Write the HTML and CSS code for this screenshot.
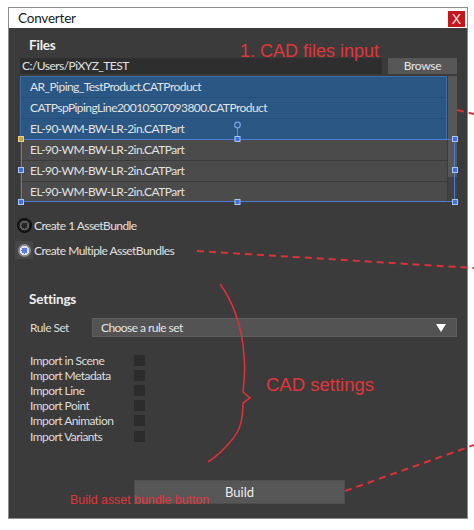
FILE: index.html
```html
<!DOCTYPE html>
<html>
<head>
<meta charset="utf-8">
<link rel="stylesheet" href="styles.css">
</head>
<body>
<div class="window">
  <div class="titlebar">
    <span class="title">Converter</span>
    <span class="close">X</span>
  </div>
  <div class="content">
    <div class="heading">Files</div>
    <div class="path-row">
      <div class="path">C:/Users/PiXYZ_TEST</div>
      <div class="browse">Browse</div>
    </div>
    <div class="list-wrap">
      <div class="list">
        <div class="sel-group">
          <div class="row sel">AR_Piping_TestProduct.CATProduct</div>
          <div class="row sel">CATPspPipingLine20010507093800.CATProduct</div>
          <div class="row sel last">EL-90-WM-BW-LR-2in.CATPart</div>
        </div>
        <div class="row">EL-90-WM-BW-LR-2in.CATPart</div>
        <div class="row">EL-90-WM-BW-LR-2in.CATPart</div>
        <div class="row">EL-90-WM-BW-LR-2in.CATPart</div>
      </div>
      <div class="scroll"><div class="thumb"></div></div>
    </div>
    <div class="radios">
      <div class="radio-row first">
        <span class="rbox"><span class="radio off"></span></span>
        <span class="rlabel">Create 1 AssetBundle</span>
      </div>
      <div class="radio-row second">
        <span class="rbox active"><span class="radio on"></span></span>
        <span class="rlabel">Create Multiple AssetBundles</span>
      </div>
    </div>
    <div class="heading settings">Settings</div>
    <div class="rule-row">
      <span class="label">Rule Set</span>
      <div class="dropdown"><span>Choose a rule set</span><span class="tri"></span></div>
    </div>
    <div class="checks">
      <div class="check-row"><span class="clabel">Import in Scene</span><span class="cb"></span></div>
      <div class="check-row"><span class="clabel">Import Metadata</span><span class="cb"></span></div>
      <div class="check-row"><span class="clabel">Import Line</span><span class="cb"></span></div>
      <div class="check-row"><span class="clabel">Import Point</span><span class="cb"></span></div>
      <div class="check-row"><span class="clabel">Import Animation</span><span class="cb"></span></div>
      <div class="check-row"><span class="clabel">Import Variants</span><span class="cb"></span></div>
    </div>
    <div class="build">Build</div>
  </div>
</div>

<svg class="overlay" width="474" height="530" viewBox="0 0 474 530">
  <rect x="21.5" y="139.5" width="433" height="62" fill="none" stroke="#4c7ad4" stroke-width="1"/>
  <line x1="237.5" y1="128" x2="237.5" y2="139" stroke="#5d8ade" stroke-width="1"/>
  <circle cx="237.5" cy="125" r="2.8" fill="none" stroke="#7aa4ea" stroke-width="1.2"/>
  <g fill="#3f70e0" stroke="#a9c6f6" stroke-width="1">
    <rect x="235" y="136.5" width="5" height="5"/>
    <rect x="452.5" y="136.5" width="5" height="5"/>
    <rect x="18.5" y="167.5" width="5" height="5"/>
    <rect x="452.5" y="167.5" width="5" height="5"/>
    <rect x="18.5" y="199.5" width="5" height="5"/>
    <rect x="235" y="199.5" width="5" height="5"/>
    <rect x="452.5" y="199.5" width="5" height="5"/>
  </g>
  <rect x="18.5" y="136.5" width="5" height="5" fill="#c9a63a" stroke="#e6d28a" stroke-width="1"/>

  <g stroke="#df3038" stroke-width="2" fill="none" stroke-dasharray="7 5">
    <line x1="197" y1="251" x2="474" y2="268"/>
    <line x1="345" y1="491" x2="474" y2="445"/>
    <line x1="457" y1="110" x2="474" y2="114"/>
  </g>
  <path d="M220,284 C232,300 242,325 244,355 C246,375 243,388 243,392 L250,398 L243,403 C243,420 240,432 230,442 C222,452 214,458 208,462" fill="none" stroke="#df3038" stroke-width="1.6"/>

  <text x="240" y="57" class="anno big">1. CAD files input</text>
  <text x="266" y="391" class="anno mid">CAD settings</text>
  <text x="70" y="504" class="anno small">Build asset bundle button</text>
</svg>
</body>
</html>
```

FILE: styles.css
```css
* { box-sizing: border-box; }
html, body { margin: 0; padding: 0; background: #ffffff; }
body {
  width: 474px;
  height: 530px;
  position: relative;
  overflow: hidden;
  font-family: Lato, "Noto Sans", sans-serif;
}
.window {
  margin: 7px 0 0 8px;
  width: 460px;
  border: 1px solid #8c8c8c;
}
.titlebar {
  height: 20px;
  background: #ffffff;
  display: flex;
  align-items: center;
  justify-content: space-between;
  padding: 0 2px 0 9px;
}
.title { font-size: 13.5px; color: #1a1a1a; letter-spacing: -0.2px; }
.close {
  width: 17px;
  height: 16px;
  margin-top: 2px;
  background: #c4161c;
  color: #ffe6e6;
  font: 14px "Liberation Sans", sans-serif;
  display: flex;
  align-items: center;
  justify-content: center;
}
.content {
  background: #3b3b3b;
  height: 490px;
  padding: 9px 10px 0 11px;
  color: #dcdcdc;
  font-size: 12px;
  letter-spacing: -0.55px;
}
.heading {
  font-weight: 700;
  font-size: 13.5px;
  letter-spacing: -0.2px;
  line-height: 16px;
  height: 16px;
  padding-left: 9px;
  color: #f0f0f0;
}
.path-row {
  display: flex;
  gap: 6px;
  margin-top: 5px;
  height: 16px;
}
.path {
  flex: 1;
  background: #2e2e2e;
  padding-left: 2px;
  line-height: 16px;
  color: #e2e2e2;
}
.browse {
  width: 69px;
  background: #575757;
  text-align: center;
  line-height: 16px;
  color: #e6e6e6;
  letter-spacing: -0.3px;
}
.list-wrap {
  display: flex;
  margin-top: 2px;
  gap: 1px;
}
.list { width: 427px; }
.sel-group { border: 1px solid #3e6ea6; border-bottom: none; }
.row {
  height: 21px;
  line-height: 20px;
  padding-left: 10px;
  background: #4b4b4b;
  border-bottom: 1px solid #3c3c3c;
  color: #e2e2e2;
  white-space: nowrap;
  overflow: hidden;
}
.row.sel {
  background: #2b5784;
  border-bottom-color: #254c76;
  padding-left: 9px;
}
.row.sel.last { border-bottom-color: #2b5784; }
.scroll { width: 9px; background: #414141; height: 126px; }
.thumb { height: 101px; background: #575757; }

.radios { margin-left: -5px; margin-top: 13px; }
.radio-row { display: flex; align-items: center; height: 18px; }
.radio-row.second { margin-top: 7px; }
.rbox {
  width: 18px;
  height: 18px;
  display: flex;
  align-items: center;
  justify-content: center;
  margin-right: 1px;
}
.rbox.active { background: #474747; }
.radio { border-radius: 50%; display: block; }
.radio.off {
  width: 15px;
  height: 15px;
  background: radial-gradient(circle, #262626 0 3px, #5c5c5c 3px 4.6px, #262626 4.6px 6px, #0e0e0e 6px);
}
.radio.on {
  width: 13px;
  height: 13px;
  background: radial-gradient(circle, #5b7bd6 0 3px, #dfe3ee 3px 4.8px, #8a8a8a 4.8px 6.5px);
}
.rlabel { color: #e0e0e0; }

.settings { margin-top: 32px; }
.rule-row {
  display: flex;
  align-items: center;
  margin-top: 11px;
  height: 19px;
}
.label { width: 72px; padding-left: 10px; }
.dropdown {
  flex: 1;
  height: 19px;
  background: #535353;
  border: 1px solid #5e5e5e;
  display: flex;
  align-items: center;
  justify-content: space-between;
  padding: 0 10px 0 8px;
  color: #e4e4e4;
}
.tri {
  width: 0;
  height: 0;
  border-left: 5px solid transparent;
  border-right: 5px solid transparent;
  border-top: 8px solid #ffffff;
}
.checks { margin-top: 15.6px; }
.check-row { display: flex; align-items: center; height: 15.2px; }
.clabel { width: 114px; padding-left: 10px; }
.cb { width: 11px; height: 11px; background: #2c2c2c; display: block; }

.build {
  margin: 36.2px 0 0 114px;
  width: 211px;
  height: 24px;
  background: #575757;
  border: 1px solid #4c4c4c;
  color: #eeeeee;
  font-size: 13px;
  letter-spacing: 0;
  display: flex;
  align-items: center;
  justify-content: center;
}

.overlay {
  position: absolute;
  top: 0;
  left: 0;
  pointer-events: none;
}
.anno { fill: #e0353a; font-family: "Liberation Sans", Arial, sans-serif; }
.anno.big { font-size: 18px; }
.anno.mid { font-size: 18.5px; }
.anno.small { font-size: 12.4px; }
```
